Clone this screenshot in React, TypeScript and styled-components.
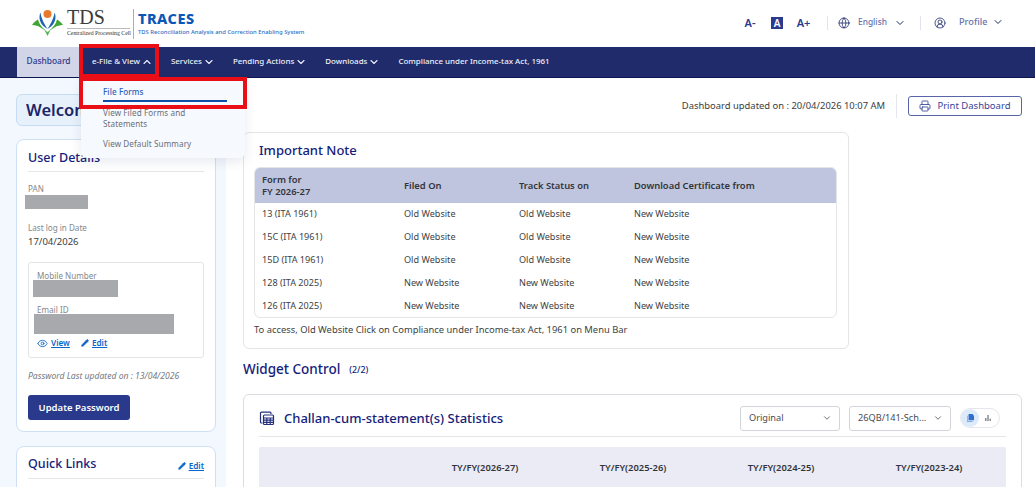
import React from "react";
import styled, { createGlobalStyle } from "styled-components";
import { ChevronDown, ChevronUp, CircleUserRound, Eye, Globe, Pencil, Printer } from "lucide-react";

const Global = createGlobalStyle`
  html, body { margin: 0; padding: 0; height: 487px; overflow: hidden; background: #fff; }
  body { font-family: "Noto Sans", "Liberation Sans", sans-serif; color: #333; }
  * { box-sizing: border-box; }
`;

const navy = "#1f2b6b";
const ink = "#14217a";
const link = "#0b66c9";

const Page = styled.div`width: 1035px; height: 487px; overflow: hidden; display: flex; flex-direction: column;`;

const Header = styled.header`height: 47px; flex: none; padding: 4px 31px 0 31px; display: flex; align-items: flex-start; justify-content: space-between; background: #fff;`;
const Brand = styled.div`display: flex; align-items: center; height: 36px;`;
const LogoText = styled.div`display: flex; flex-direction: column; margin-left: 3px; width: 63px; margin-top: 2px;`;
const Tds = styled.span`font: 400 20px/19px "Liberation Serif", serif; color: #3c3c3c;`;
const Cell = styled.span`font: 400 5.75px/9px "Liberation Serif", serif; color: #333; border-top: 1px solid #bbb; white-space: nowrap; margin-top: 1px;`;
const BrandRule = styled.div`width: 1px; height: 30px; background: #8fb4dc; margin: 3px 4px 0 3px;`;
const TracesBlock = styled.div`display: flex; flex-direction: column; margin-top: 3px; gap: 2px;`;
const Traces = styled.span`font: 800 14.5px/16px "Noto Sans", sans-serif; letter-spacing: .5px; color: #0b57b8;`;
const TracesSub = styled.span`font: 500 5.85px/9px "Noto Sans", sans-serif; color: #2a6fc4; white-space: nowrap;`;

const Tools = styled.div`display: flex; align-items: center; height: 36px; color: ${navy};`;
const FontBtn = styled.span<{ $active?: boolean; $w: number; $m: number }>`
  display: inline-flex; align-items: center; justify-content: center; width: ${p => p.$w}px; height: 12px;
  font: 600 ${p => (p.$active ? "10px" : "11px")}/12px "Noto Sans", sans-serif; white-space: nowrap;
  color: ${p => (p.$active ? "#fff" : "#2a3a8f")}; background: ${p => (p.$active ? "#2a3a8f" : "transparent")};
  margin-right: ${p => p.$m}px; margin-top: 2px;
`;
const Sep = styled.span`width: 1px; height: 14px; background: #e1e4ec; margin-top: 2px;`;
const Lang = styled.span`font: 500 8.4px/1 "Noto Sans", sans-serif; color: #6672ae; margin: 0 8px 0 8px; width: 28px;`;
const Prof = styled.span`font: 500 9.2px/1 "Noto Sans", sans-serif; color: #6672ae; margin: 0 5px 0 13px; width: 28px;`;

const Nav = styled.nav`height: 31px; flex: none; position: relative; background: ${navy}; border-bottom: 1px solid #0c1650; display: flex; padding-left: 17px; z-index: 5;`;
const NavTab = styled.div`width: 63px; background: #d2d5e7; color: #2b3a8a; font: 500 8.4px/28px "Noto Sans", sans-serif; text-align: center;`;
const NavItem = styled.div<{ $pad?: number }>`
  display: flex; align-items: center; gap: 1px; height: 30px; color: #eef0f8; font: 500 7.95px/1 "Noto Sans", sans-serif; white-space: nowrap;
  padding-left: ${p => p.$pad ?? 18}px;
`;
const Menu = styled.div`
  position: absolute; left: 81px; top: 31px; width: 164px; height: 80px; background: #f6f9fe; border-radius: 0 0 6px 6px;
  box-shadow: 0 4px 12px rgba(30,50,100,.1); padding: 8px 18px 0 22px; display: flex; flex-direction: column;
  font: 400 8.1px/11px "Noto Sans", sans-serif; color: #6c6f78; letter-spacing: .1px;
`;
const MenuActive = styled.div`color: #2a62b8; font-weight: 500; height: 17px; border-bottom: 2px solid #0d4fa8; margin-bottom: 5px; line-height: 12px;`;
const MenuItem = styled.div`margin-bottom: 9px;`;
const RedBox = styled.div<{ $l: number; $t: number; $w: number; $h: number }>`
  position: absolute; left: ${p => p.$l}px; top: ${p => p.$t}px; width: ${p => p.$w}px; height: ${p => p.$h}px;
  border: 4px solid #ea0f16; pointer-events: none;
`;

const Body = styled.div`flex: 1; display: flex; min-height: 0;`;
const Side = styled.aside`width: 226px; flex: none; background: #f3f7fe; padding: 16px 10px 0 16px; display: flex; flex-direction: column; gap: 13px;`;
const Welcome = styled.div`height: 32px; flex: none; border: 1px solid #c7dcf4; border-radius: 6px; background: #e7f1fc; padding-left: 9px; font: 600 16.5px/29px "Noto Sans", sans-serif; color: #1a2568;`;
const SideCard = styled.section`background: #fff; border: 1px solid #cfe0f5; border-radius: 8px; padding: 8px 11px 0 11px; flex: none; height: 293px;`;
const QuickCard = styled(SideCard)`margin-top: 1px; padding-top: 7px; height: 120px;`;
const CardHead = styled.div`display: flex; align-items: center; justify-content: space-between; height: 24px; border-bottom: 1px solid #e6e7ea;`;
const CardTitle = styled.h3`margin: -3px 0 0; font: 500 12.5px/1 "Noto Sans", sans-serif; color: ${ink};`;
const SmallLabel = styled.div`font: 400 8.1px/12px "Noto Sans", sans-serif; color: #85878c;`;
const Value = styled.div`margin-top: 1px; font: 400 9.5px/14px "Noto Sans", sans-serif; color: #3c3d40;`;
const Redact = styled.div<{ $w: number; $h: number; $x?: number }>`width: ${p => p.$w}px; height: ${p => p.$h}px; background: #a8a9ac; margin-left: ${p => p.$x ?? 0}px;`;
const Group = styled.div<{ $top: number }>`margin-top: ${p => p.$top}px;`;
const Contact = styled.div`margin-top: 13px; height: 96px; border: 1px solid #e3e4e8; border-radius: 3px; padding: 8px 8px 0 8px;`;
const ContactLabel = styled(SmallLabel)`line-height: 9px;`;
const Links = styled.div`display: flex; align-items: center; gap: 11px; margin-top: 3px;`;
const TextLink = styled.a`display: inline-flex; align-items: center; gap: 3px; font: 600 8.2px/12px "Noto Sans", sans-serif; color: ${link}; text-decoration: underline;`;
const PassNote = styled.div`margin-top: 12px; font: italic 400 8.6px/12px "Noto Sans", sans-serif; color: #77797f;`;
const PrimaryBtn = styled.button`display: block; margin: 13px 0 11px; width: 102px; height: 25px; border: 0; border-radius: 3px; background: #293a8c; color: #fff; font: 600 9.5px/1 "Noto Sans", sans-serif; padding: 0;`;
const QuickHead = styled(CardHead)`height: 25px;`;

const Main = styled.main`flex: 1; min-width: 0; background: #fff; padding: 18px 13px 0 17px; display: flex; flex-direction: column;`;
const TopRow = styled.div`height: 20px; flex: none; display: flex; justify-content: flex-end; align-items: center;`;
const Updated = styled.span`font: 400 9.42px/1 "Noto Sans", sans-serif; color: #3c3d40;`;
const VRule = styled.span`width: 1px; height: 24px; background: #e6e7ee; margin: 0 11px;`;
const OutlineBtn = styled.button`width: 114px; height: 20px; border: 1px solid #5965a8; border-radius: 3px; background: #fff; color: #36449a; font: 400 9.5px/1 "Noto Sans", sans-serif; display: flex; align-items: center; justify-content: center; gap: 6px; padding: 0;`;
const NoteCard = styled.section`margin-top: 16px; width: 606px; height: 217px; flex: none; border: 1px solid #e4e5e9; border-radius: 6px; padding: 8px 11px 0 10px;`;
const NoteTitle = styled.h3`margin: 0 0 0 5px; font: 500 13px/18px "Noto Sans", sans-serif; color: ${ink};`;
const NoteTable = styled.div`margin-top: 8px; border: 1px solid #e4e5e9; border-radius: 6px; overflow: hidden; height: 151px;`;
const Row = styled.div`display: grid; grid-template-columns: 142px 115px 115px 1fr; padding-left: 7px; height: 23px; align-items: center; font: 400 9.1px/1 "Noto Sans", sans-serif; color: #3e3f42; position: relative; top: -1px;`;
const HeadRow = styled(Row)`top: 0; height: 35px; background: #bfc5de; font: 600 9.4px/11.5px "Noto Sans", sans-serif; color: #33343a;`;
const NoteFoot = styled.div`margin-top: 6px; font: 400 9.4px/12px "Noto Sans", sans-serif; color: #3e3f42;`;
const WidgetHead = styled.div`display: flex; align-items: center; gap: 9px; margin-top: 11px; height: 20px; flex: none;`;
const WidgetTitle = styled.h2`margin: 0; font: 500 13.5px/1 "Noto Sans", sans-serif; color: ${ink};`;
const WidgetCount = styled.span`font: 500 8.8px/1 "Noto Sans", sans-serif; color: ${ink};`;
const WidgetCard = styled.section`margin-top: 14px; flex: none; border: 1px solid #dcdde2; border-radius: 6px; padding: 11px 15px 0; height: 140px;`;
const WidgetBar = styled.div`display: flex; align-items: center; height: 31px; border-bottom: 1px solid #e5e6ea; padding-bottom: 6px;`;
const WidgetName = styled.h3`margin: 1px auto 0 9px; font: 500 13px/1 "Noto Sans", sans-serif; color: ${ink};`;
const Select = styled.div<{ $w: number }>`width: ${p => p.$w}px; height: 25px; border: 1px solid #d3d4d9; border-radius: 3px; margin-right: 9px; padding: 0 7px 0 8px; display: flex; align-items: center; justify-content: space-between; font: 400 9.2px/1 "Noto Sans", sans-serif; color: #4a4b50;`;
const Toggle = styled.div`width: 40px; height: 20px; border: 1px solid #e4e6ec; border-radius: 10px; margin-right: 6px; display: flex; align-items: center;`;
const ToggleOn = styled.span`width: 18px; height: 18px; border-radius: 50%; background: #dceafa; display: flex; align-items: center; justify-content: center;`;
const ToggleOff = styled.span`width: 18px; height: 18px; display: flex; align-items: center; justify-content: center;`;
const StatHead = styled.div`margin-top: 10px; height: 60px; background: #eaebf4; border-radius: 2px; display: grid; grid-template-columns: 152px repeat(4, 148px); align-items: start; padding-top: 15px; font: 600 9.4px/12px "Noto Sans", sans-serif; color: #33343a;`;
const StatCell = styled.span`text-align: center;`;

const Logo = () => (
  <svg width="33" height="29" viewBox="0 0 33 29" aria-hidden="true">
    <circle cx="16.5" cy="6" r="4" fill="#e87b2b" />
    <path d="M16.5 21 C9 17 7 10 9.5 4.5 C10 9 12 14 16.5 21Z" fill="#1f62ad" />
    <path d="M16.5 21 C24 17 26 10 23.5 4.5 C23 9 21 14 16.5 21Z" fill="#1f62ad" />
    <path d="M15.5 23 C11 21 8 17 1 17 C3 14 5.5 12.5 7 11.5 C8 16 11 20 15.5 23Z" fill="#3fa535" />
    <path d="M17.5 23 C22 21 25 17 32 17 C30 14 27.5 12.5 26 11.5 C25 16 22 20 17.5 23Z" fill="#3fa535" />
    <path d="M16.5 28 L13.5 22 L16.5 24 L19.5 22Z" fill="#57b45a" />
  </svg>
);

const CalcIcon = () => (
  <svg width="16" height="16" viewBox="0 0 16 16" fill="none" stroke="#25317f" strokeWidth="1.2" aria-hidden="true">
    <path d="M3.5 13 H2.5 A1 1 0 0 1 1.5 12 V3.2 A1 1 0 0 1 2.5 2.2 H11 A1 1 0 0 1 12 3.2 V4" />
    <rect x="4.5" y="5" width="10" height="9.5" rx="1" />
    <path d="M4.5 8 H14.5 M4.5 10.2 H14.5 M4.5 12.3 H14.5 M7.8 8 V14.5 M11.2 8 V14.5" />
  </svg>
);
const CopyIcon = () => (
  <svg width="7" height="8" viewBox="0 0 9 10" aria-hidden="true"><path d="M2 0H7L9 2V8H2Z" fill="#2f6fd0" /><path d="M0 2H1V9H7V10H0Z" fill="#7fa9e4" /></svg>
);
const BarsIcon = () => (
  <svg width="6" height="6" viewBox="0 0 8 8" fill="#8b8d94" aria-hidden="true"><rect x="0" y="4" width="2" height="4" /><rect x="3" y="0" width="2" height="8" /><rect x="6" y="5" width="2" height="3" /></svg>
);
const EditGlyph = () => <Pencil size={8} strokeWidth={2.2} fill={link} />;

const notes = [
  ["13 (ITA 1961)", "Old Website", "Old Website", "New Website"],
  ["15C (ITA 1961)", "Old Website", "Old Website", "New Website"],
  ["15D (ITA 1961)", "Old Website", "Old Website", "New Website"],
  ["128 (ITA 2025)", "New Website", "New Website", "New Website"],
  ["126 (ITA 2025)", "New Website", "New Website", "New Website"],
];

export default function App() {
  return (
    <Page>
      <Global />
      <Header>
        <Brand>
          <Logo />
          <LogoText>
            <Tds>TDS</Tds>
            <Cell>Centralized Processing Cell</Cell>
          </LogoText>
          <BrandRule />
          <TracesBlock>
            <Traces>TRACES</Traces>
            <TracesSub>TDS Reconciliation Analysis and Correction Enabling System</TracesSub>
          </TracesBlock>
        </Brand>
        <Tools>
          <FontBtn $w={12} $m={15}>A-</FontBtn>
          <FontBtn $w={12} $m={14} $active>A</FontBtn>
          <FontBtn $w={13} $m={17}>A+</FontBtn>
          <Sep />
          <Globe size={12} strokeWidth={1.6} style={{ marginLeft: 10, marginTop: 2 }} />
          <Lang>English</Lang>
          <ChevronDown size={12} strokeWidth={2} style={{ marginRight: 14, marginTop: 2 }} />
          <Sep />
          <CircleUserRound size={12} strokeWidth={1.6} style={{ marginLeft: 13, marginTop: 2 }} />
          <Prof>Profile</Prof>
          <ChevronDown size={12} strokeWidth={2} />
        </Tools>
      </Header>
      <Nav>
        <NavTab>Dashboard</NavTab>
        <NavItem $pad={12}>e-File &amp; View <ChevronUp size={12} strokeWidth={2.2} /></NavItem>
        <NavItem>Services <ChevronDown size={12} strokeWidth={2.2} /></NavItem>
        <NavItem>Pending Actions <ChevronDown size={12} strokeWidth={2.2} /></NavItem>
        <NavItem>Downloads <ChevronDown size={12} strokeWidth={2.2} /></NavItem>
        <NavItem>Compliance under Income-tax Act, 1961</NavItem>
        <Menu>
          <MenuActive>File Forms</MenuActive>
          <MenuItem>View Filed Forms and<br />Statements</MenuItem>
          <MenuItem>View Default Summary</MenuItem>
        </Menu>
        <RedBox $l={79} $t={-3} $w={80} $h={34} />
        <RedBox $l={79} $t={30} $w={168} $h={32} />
      </Nav>
      <Body>
        <Side>
          <Welcome>Welcome</Welcome>
          <SideCard>
            <CardHead><CardTitle>User Details</CardTitle></CardHead>
            <Group $top={11}>
              <SmallLabel>PAN</SmallLabel>
              <Redact $w={63} $h={14} $x={-3} />
            </Group>
            <Group $top={13}>
              <SmallLabel>Last log in Date</SmallLabel>
              <Value>17/04/2026</Value>
            </Group>
            <Contact>
              <ContactLabel>Mobile Number</ContactLabel>
              <Redact $w={85} $h={17} $x={-4} />
              <Group $top={8}>
                <ContactLabel>Email ID</ContactLabel>
                <Redact $w={140} $h={20} $x={-3} />
              </Group>
              <Links>
                <TextLink><Eye size={11} strokeWidth={1.8} />View</TextLink>
                <TextLink><EditGlyph />Edit</TextLink>
              </Links>
            </Contact>
            <PassNote>Password Last updated on : 13/04/2026</PassNote>
            <PrimaryBtn>Update Password</PrimaryBtn>
          </SideCard>
          <QuickCard>
            <QuickHead>
              <CardTitle>Quick Links</CardTitle>
              <TextLink><EditGlyph />Edit</TextLink>
            </QuickHead>
          </QuickCard>
        </Side>
        <Main>
          <TopRow>
            <Updated>Dashboard updated on : 20/04/2026 10:07 AM</Updated>
            <VRule />
            <OutlineBtn><Printer size={12} strokeWidth={1.7} />Print Dashboard</OutlineBtn>
          </TopRow>
          <NoteCard>
            <NoteTitle>Important Note</NoteTitle>
            <NoteTable>
              <HeadRow>
                <span>Form for<br />FY 2026-27</span>
                <span>Filed On</span>
                <span>Track Status on</span>
                <span>Download Certificate from</span>
              </HeadRow>
              {notes.map(r => (
                <Row key={r[0]}>{r.map((c, i) => <span key={i}>{c}</span>)}</Row>
              ))}
            </NoteTable>
            <NoteFoot>To access, Old Website Click on Compliance under Income-tax Act, 1961 on Menu Bar</NoteFoot>
          </NoteCard>
          <WidgetHead>
            <WidgetTitle>Widget Control</WidgetTitle>
            <WidgetCount>(2/2)</WidgetCount>
          </WidgetHead>
          <WidgetCard>
            <WidgetBar>
              <CalcIcon />
              <WidgetName>Challan-cum-statement(s) Statistics</WidgetName>
              <Select $w={100}>Original <ChevronDown size={10} color="#555" /></Select>
              <Select $w={102}>26QB/141-Sch... <ChevronDown size={10} color="#555" /></Select>
              <Toggle>
                <ToggleOn><CopyIcon /></ToggleOn>
                <ToggleOff><BarsIcon /></ToggleOff>
              </Toggle>
            </WidgetBar>
            <StatHead>
              <span />
              <StatCell>TY/FY(2026-27)</StatCell>
              <StatCell>TY/FY(2025-26)</StatCell>
              <StatCell>TY/FY(2024-25)</StatCell>
              <StatCell>TY/FY(2023-24)</StatCell>
            </StatHead>
          </WidgetCard>
        </Main>
      </Body>
    </Page>
  );
}
